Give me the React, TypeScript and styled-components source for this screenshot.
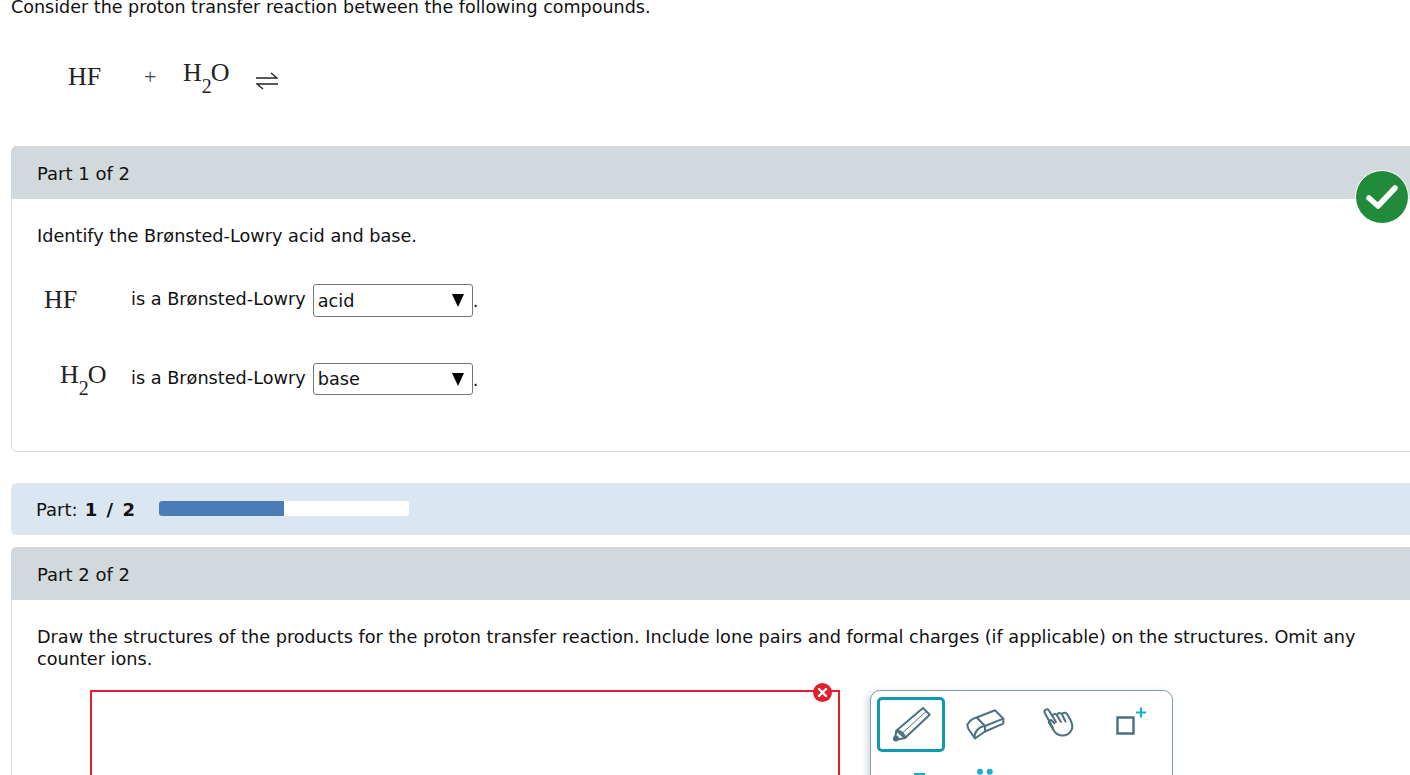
import React, { FC } from 'react'
import styled, { createGlobalStyle } from 'styled-components'

const GlobalStyle = createGlobalStyle`
html, body {
 margin: 0;
 padding: 0;
 background: #fff;
 overflow: hidden;
}
body {
 font-family: "DejaVu Sans", Verdana, sans-serif;
 font-size: 17.68px;
 color: #111;
}
`

const Page = styled.div`
height: 775px;
overflow: hidden;
padding-left: 11px;
`

const Intro = styled.p`
margin: -4px 0 0;
font-size: 17.55px;
line-height: 22px;
`

const Equation = styled.div`
display: flex;
align-items: center;
margin: 44px 0 54px 57px;
height: 30px;
`

const Formula = styled.span<{ $width?: number }>`
font-family: "Liberation Serif", "Times New Roman", serif;
font-size: 26px;
color: #222;
line-height: 30px;
display: inline-block;
width: ${p => (p.$width ? `${p.$width}px` : 'auto')};
`

const WaterFormula = styled(Formula)`
margin-bottom: 8px;

sub {
 font-size: 20px;
 line-height: 0;
 vertical-align: -12px;
 margin-right: -1px;
}
`

const Plus = styled.span`
font-family: "Liberation Serif", "Times New Roman", serif;
font-size: 22px;
color: #444;
width: 39px;
`

const EquilibriumArrow = styled.svg`
margin: 7px 0 0 26px;
`

const Panel = styled.section`
position: relative;
width: 1440px;
border: 1px solid #d1d9dc;
border-radius: 6px;
`

const PanelHeader = styled.header`
height: 53px;
margin: -1px -1px 0;
padding: 2px 26px 0;
box-sizing: border-box;
display: flex;
align-items: center;
font-size: 18px;
background: #d1d9dc;
border-radius: 6px 6px 0 0;
`

const Done = styled.span`
position: absolute;
left: 1343px;
top: 23px;
width: 54px;
height: 54px;
border-radius: 50%;
border: 1.5px solid #fff;
box-sizing: border-box;
background: #228b3b;
display: flex;
align-items: center;
justify-content: center;
`

const Prompt = styled.p`
margin: 0;
padding: 26px 80px 0 25px;
line-height: 22px;
`

const AnswerGrid = styled.div`
padding: 37px 0 55px 0;
display: flex;
flex-direction: column;
gap: 46px;
`

const AnswerRow = styled.div`
display: flex;
align-items: center;
height: 33px;
`

const AnswerLabel = styled.div<{ $indent: number }>`
display: flex;
align-items: center;
width: 119px;
padding: 0 0 2px ${p => p.$indent}px;
box-sizing: border-box;
`

const AnswerText = styled.span`
margin: 0 7px 4px 0;
`

const Select = styled.div<{ $height: number }>`
align-self: flex-start;
width: 160px;
height: ${p => p.$height}px;
box-sizing: border-box;
border: 1px solid #767676;
border-radius: 3px;
padding: 0 8px 0 4px;
display: flex;
align-items: center;
justify-content: space-between;
`

const Arrow = styled.span`
width: 0;
height: 0;
border-left: 6.5px solid transparent;
border-right: 6.5px solid transparent;
border-top: 13px solid #000;
`

const Progress = styled.div`
width: 1440px;
height: 52px;
margin-top: 31px;
padding-left: 25px;
box-sizing: border-box;
background: #dae6f0;
border-radius: 6px;
display: flex;
align-items: center;
`

const ProgressLabel = styled.span`
width: 123px;
font-size: 18px;
padding-top: 1px;
word-spacing: 1.5px;

b {
 font-weight: 700;
 word-spacing: 3px;
}
`

const Track = styled.div`
width: 250px;
height: 15px;
margin-bottom: 1px;
background: #fff;
border-radius: 3px;
overflow: hidden;
`

const TrackFill = styled.div`
height: 100%;
background: #4a7db6;
`

const PartTwo = styled(Panel)`
margin-top: 12px;
border-bottom: 0;
`

const Workspace = styled.div`
display: flex;
align-items: flex-start;
gap: 30px;
margin: 20px 0 0 78px;
`

const Canvas = styled.div`
position: relative;
width: 750px;
height: 200px;
box-sizing: border-box;
border: 2px solid #e41f2d;
`

const CanvasError = styled.span`
position: absolute;
right: 6.5px;
top: -9px;
width: 19px;
height: 19px;
border-radius: 50%;
background: #e41f2d;
display: flex;
align-items: center;
justify-content: center;
`

const Toolbar = styled.div`
width: 303px;
box-sizing: border-box;
padding: 6px;
border: 1px solid #7f9ea8;
border-radius: 10px;
background: #fff;
box-shadow: -3px 2px 6px rgba(80, 110, 120, 0.25);
display: grid;
grid-template-columns: repeat(4, 68px);
grid-auto-rows: 55px;
gap: 6px;
`

const ToolButton = styled.div<{ $active?: boolean }>`
border: 3px solid ${p => (p.$active ? '#0f99b2' : 'transparent')};
border-radius: 5px;
box-sizing: border-box;
display: flex;
align-items: center;
justify-content: center;

svg {
 display: block;
 flex: none;
}
`

const ICON = '#4a717f'
const ACCENT = '#18aecb'

const Icon: FC<{ children: React.ReactNode }> = ({ children }) => (
 <svg width="68" height="55" viewBox="0 0 68 55" fill="none" stroke={ICON} strokeWidth="2" strokeLinejoin="round" strokeLinecap="round">
  {children}
 </svg>
)

const Water = () => <WaterFormula>H<sub>2</sub>O</WaterFormula>

const App: FC = () => {
 return (
  <Page>
   <GlobalStyle />
   <Intro>Consider the proton transfer reaction between the following compounds.</Intro>

   <Equation>
    <Formula $width={76}>HF</Formula>
    <Plus>+</Plus>
    <Water />
    <EquilibriumArrow width="22" height="18" viewBox="0 0 22 18" fill="none" stroke="#222" strokeWidth="1.4">
     <path d="M0 6h21L15 1" />
     <path d="M22 12H1l6 5" />
    </EquilibriumArrow>
   </Equation>

   <Panel>
    <PanelHeader>Part 1 of 2</PanelHeader>
    <Done>
     <svg width="34" height="28" viewBox="0 0 34 28" fill="none" stroke="#fff" strokeWidth="5.5" strokeLinecap="round" strokeLinejoin="round">
      <path d="M4 15l9 8L30 5" />
     </svg>
    </Done>
    <Prompt>Identify the Brønsted-Lowry acid and base.</Prompt>
    <AnswerGrid>
     <AnswerRow>
      <AnswerLabel $indent={32}><Formula>HF</Formula></AnswerLabel>
      <AnswerText>is a Brønsted-Lowry</AnswerText>
      <Select $height={33}>acid<Arrow /></Select>.
     </AnswerRow>
     <AnswerRow>
      <AnswerLabel $indent={48}><Water /></AnswerLabel>
      <AnswerText>is a Brønsted-Lowry</AnswerText>
      <Select $height={32}>base<Arrow /></Select>.
     </AnswerRow>
    </AnswerGrid>
   </Panel>

   <Progress>
    <ProgressLabel>Part: <b>1 / 2</b></ProgressLabel>
    <Track><TrackFill style={{ width: `${(1 / 2) * 100}%` }} /></Track>
   </Progress>

   <PartTwo>
    <PanelHeader>Part 2 of 2</PanelHeader>
    <Prompt>Draw the structures of the products for the proton transfer reaction. Include lone pairs and formal charges (if applicable) on the structures. Omit any counter ions.</Prompt>
    <Workspace>
     <Canvas>
      <CanvasError>
       <svg width="11" height="11" viewBox="0 0 11 11" stroke="#fff" strokeWidth="2.4" strokeLinecap="round">
        <path d="M2 2l7 7M9 2l-7 7" />
       </svg>
      </CanvasError>
     </Canvas>
     <Toolbar>
      <ToolButton $active>
       <Icon>
        <path d="M19.500 33.500L46 11l6.700 6.700L28 41z" />
        <path d="M19.500 33.500L17.500 43 28 41c-.5-4-4-7.500-8.500-7.500z" />
        <path d="M24 37.300L49.300 14.300" strokeWidth="1" />
        <circle cx="19" cy="41.500" r="2" fill={ICON} />
       </Icon>
      </ToolButton>
      <ToolButton>
       <Icon>
        <path d="M25.700 20.500L44 13.300l8.300 8.300v5L34 34.500 24 41.500l-6.700-9.800-1-4c2-3.500 5.500-6.500 9.400-7.200z" />
        <path d="M25.700 20.500L34 29l18.300-7.400" />
        <path d="M34 29v5.500" />
        <path d="M24 41c-1.500-5 3-11 10-12" />
       </Icon>
      </ToolButton>
      <ToolButton>
       <Icon>
        <path d="M28 31L19.800 16a2.400 2.400 0 0 1 4.200-2.400L31 25" />
        <path d="M27 18.500l1.500-1c1.300-.8 2.600-.5 3.400.7L36 25" />
        <path d="M32.500 17c1.300-1.500 3.300-1.500 4.300 0l3.700 7.500" />
        <path d="M37.500 16.500c1.500-1.200 3.500-1 4.500.5l3.500 6c2 4 2.500 8 .5 11-2.300 3.500-6.500 5-10.500 4.300-3.500-.6-6-3-7.500-6l-4-6.500c-1-2 1.500-3.500 3-2l2.500 2.500" />
       </Icon>
      </ToolButton>
      <ToolButton>
       <Icon>
        <path d="M18.500 20.500h16v16h-16z" strokeWidth="2.400" strokeLinejoin="miter" />
        <path d="M42 10.500v10M37 15.500h10" stroke={ACCENT} strokeWidth="2.200" strokeLinecap="butt" />
       </Icon>
      </ToolButton>
      <ToolButton>
       <Icon>
        <path d="M37 16h11" stroke={ACCENT} strokeWidth="2" strokeLinecap="butt" />
       </Icon>
      </ToolButton>
      <ToolButton>
       <Icon>
        <circle cx="29" cy="13.700" r="3" fill={ACCENT} stroke="none" />
        <circle cx="38.700" cy="13.700" r="3" fill={ACCENT} stroke="none" />
       </Icon>
      </ToolButton>
     </Toolbar>
    </Workspace>
   </PartTwo>
  </Page>
 )
}

export default App
